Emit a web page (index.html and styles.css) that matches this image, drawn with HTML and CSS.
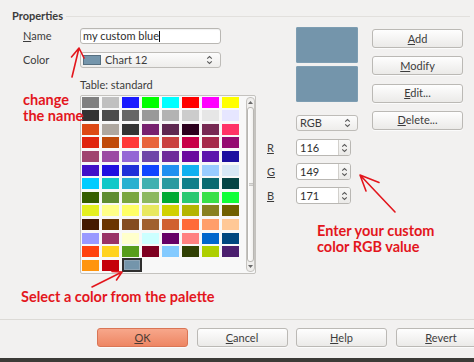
FILE: index.html
```html
<!DOCTYPE html>
<html>
<head>
<meta charset="utf-8">
<title>Properties</title>
<link rel="stylesheet" href="styles.css">
</head>
<body>
<div class="dialog">
  <div class="top">
    <div class="frame-title"><span class="frame-label">Properties</span><span class="frame-rule"></span></div>
    <div class="content">
      <div class="col-left">
        <div class="field field-name">
          <span class="lbl"><u>N</u>ame</span>
          <div class="entry">my custom blue<span class="caret"></span></div>
        </div>
        <div class="field field-color">
          <span class="lbl">Color</span>
          <div class="combo combo-color">
            <span class="combo-swatch"></span>
            <span class="combo-text">Chart 12</span>
            <svg class="updown" viewBox="0 0 7 10"><path d="M1.2 3.6 L3.5 1.5 L5.8 3.6 M1.2 6.4 L3.5 8.5 L5.8 6.4"/></svg>
          </div>
        </div>
        <div class="table-label">Table: standard</div>
        <div class="palette">
          <div class="grid">
            <span class="cell" style="background:#808080"></span><span class="cell" style="background:#c0c0c0"></span><span class="cell" style="background:#1a1aff"></span><span class="cell" style="background:#00ff00"></span><span class="cell" style="background:#00ffff"></span><span class="cell" style="background:#ff0000"></span><span class="cell" style="background:#ff00ff"></span><span class="cell" style="background:#ffff00"></span>
            <span class="cell" style="background:#333333"></span><span class="cell" style="background:#4c4c4c"></span><span class="cell" style="background:#666666"></span><span class="cell" style="background:#999999"></span><span class="cell" style="background:#b3b3b3"></span><span class="cell" style="background:#cccccc"></span><span class="cell" style="background:#e6e6e6"></span><span class="cell" style="background:#e6e6ff"></span>
            <span class="cell" style="background:#dd4814"></span><span class="cell" style="background:#aea79f"></span><span class="cell" style="background:#333333"></span><span class="cell" style="background:#77216f"></span><span class="cell" style="background:#5e2750"></span><span class="cell" style="background:#2c001e"></span><span class="cell" style="background:#772953"></span><span class="cell" style="background:#ff3366"></span>
            <span class="cell" style="background:#e0250f"></span><span class="cell" style="background:#c04a0a"></span><span class="cell" style="background:#ff3838"></span><span class="cell" style="background:#e8643c"></span><span class="cell" style="background:#c9403f"></span><span class="cell" style="background:#c80048"></span><span class="cell" style="background:#a52a4a"></span><span class="cell" style="background:#950a70"></span>
            <span class="cell" style="background:#a0456f"></span><span class="cell" style="background:#9b4ba3"></span><span class="cell" style="background:#9467d5"></span><span class="cell" style="background:#6f47a8"></span><span class="cell" style="background:#6f2b9a"></span><span class="cell" style="background:#6a0a9e"></span><span class="cell" style="background:#5c15ac"></span><span class="cell" style="background:#1c0fa0"></span>
            <span class="cell" style="background:#4010c8"></span><span class="cell" style="background:#2010e0"></span><span class="cell" style="background:#2030d8"></span><span class="cell" style="background:#1045ff"></span><span class="cell" style="background:#2090f0"></span><span class="cell" style="background:#10b0f0"></span><span class="cell" style="background:#99ccff"></span><span class="cell" style="background:#d8e8f5"></span>
            <span class="cell" style="background:#00ccff"></span><span class="cell" style="background:#10c8c8"></span><span class="cell" style="background:#28b0d0"></span><span class="cell" style="background:#40b0b0"></span><span class="cell" style="background:#2a9aa0"></span><span class="cell" style="background:#107f8a"></span><span class="cell" style="background:#0a6a70"></span><span class="cell" style="background:#064545"></span>
            <span class="cell" style="background:#355e00"></span><span class="cell" style="background:#5e8c31"></span><span class="cell" style="background:#7aa640"></span><span class="cell" style="background:#8cb860"></span><span class="cell" style="background:#00a933"></span><span class="cell" style="background:#2ac870"></span><span class="cell" style="background:#38e048"></span><span class="cell" style="background:#10ff38"></span>
            <span class="cell" style="background:#e4f020"></span><span class="cell" style="background:#ffff88"></span><span class="cell" style="background:#ffff66"></span><span class="cell" style="background:#e8e860"></span><span class="cell" style="background:#d0d000"></span><span class="cell" style="background:#b4b400"></span><span class="cell" style="background:#888020"></span><span class="cell" style="background:#706000"></span>
            <span class="cell" style="background:#441a00"></span><span class="cell" style="background:#6a3500"></span><span class="cell" style="background:#844c20"></span><span class="cell" style="background:#a0602e"></span><span class="cell" style="background:#d06030"></span><span class="cell" style="background:#ff6a38"></span><span class="cell" style="background:#ff9e6a"></span><span class="cell" style="background:#ffc896"></span>
            <span class="cell" style="background:#9999ff"></span><span class="cell" style="background:#993366"></span><span class="cell" style="background:#ffffcc"></span><span class="cell" style="background:#ccffff"></span><span class="cell" style="background:#660066"></span><span class="cell" style="background:#ff8080"></span><span class="cell" style="background:#0066cc"></span><span class="cell" style="background:#00477f"></span>
            <span class="cell" style="background:#ff420e"></span><span class="cell" style="background:#ffd320"></span><span class="cell" style="background:#579d1c"></span><span class="cell" style="background:#7e0021"></span><span class="cell" style="background:#83caff"></span><span class="cell" style="background:#314004"></span><span class="cell" style="background:#aecf00"></span><span class="cell" style="background:#4b1f6f"></span>
            <span class="cell" style="background:#ff950e"></span><span class="cell" style="background:#c5000b"></span><span class="cell sel" style="background:#7495ab"></span>
          </div>
          <div class="scroll">
            <svg class="sarrow" viewBox="0 0 5 3"><path d="M0 3 L2.5 0 L5 3 Z"/></svg>
            <div class="thumb"><svg class="grip" viewBox="0 0 5 3"><path d="M0 0.5 H5 M0 2.5 H5"/></svg></div>
            <svg class="sarrow" viewBox="0 0 5 3"><path d="M0 0 L2.5 3 L5 0 Z"/></svg>
          </div>
        </div>
      </div>
      <div class="col-mid">
        <div class="preview">
          <span class="swatch"></span>
          <span class="swatch"></span>
        </div>
        <div class="combo combo-rgb">
          <span class="combo-text">RGB</span>
          <svg class="updown" viewBox="0 0 7 10"><path d="M1.2 3.6 L3.5 1.5 L5.8 3.6 M1.2 6.4 L3.5 8.5 L5.8 6.4"/></svg>
        </div>
        <div class="spin-row spin-first">
          <span class="spin-lbl"><u>R</u></span>
          <div class="spin"><span class="spin-val">116</span><span class="spin-btns"><svg class="updown" viewBox="0 0 7 10"><path d="M1.2 3.6 L3.5 1.5 L5.8 3.6 M1.2 6.4 L3.5 8.5 L5.8 6.4"/></svg></span></div>
        </div>
        <div class="spin-row">
          <span class="spin-lbl"><u>G</u></span>
          <div class="spin"><span class="spin-val">149</span><span class="spin-btns"><svg class="updown" viewBox="0 0 7 10"><path d="M1.2 3.6 L3.5 1.5 L5.8 3.6 M1.2 6.4 L3.5 8.5 L5.8 6.4"/></svg></span></div>
        </div>
        <div class="spin-row">
          <span class="spin-lbl"><u>B</u></span>
          <div class="spin"><span class="spin-val">171</span><span class="spin-btns"><svg class="updown" viewBox="0 0 7 10"><path d="M1.2 3.6 L3.5 1.5 L5.8 3.6 M1.2 6.4 L3.5 8.5 L5.8 6.4"/></svg></span></div>
        </div>
      </div>
      <div class="col-btns">
        <div class="btn"><span><u>A</u>dd</span></div>
        <div class="btn"><span><u>M</u>odify</span></div>
        <div class="btn"><span><u>E</u>dit...</span></div>
        <div class="btn"><span><u>D</u>elete...</span></div>
      </div>
    </div>
  </div>
  <div class="bottom">
    <div class="btn btn-ok"><span><u>O</u>K</span></div>
    <div class="btn"><span><u>C</u>ancel</span></div>
    <div class="btn"><span><u>H</u>elp</span></div>
    <div class="btn"><span><u>R</u>evert</span></div>
  </div>
  <div class="taskbar"></div>

  <div class="note note-name">change<br>the name</div>
  <div class="note note-rgb">Enter your custom<br>color RGB value</div>
  <div class="note note-palette">Select a color from the palette</div>
  <svg class="arrows" viewBox="0 0 474 362">
    <g>
      <path d="M72 77 L79 48 M71.5 57 L79 48 L84 58"/>
      <path d="M92 287 L122 272 M112 271.5 L122 272 L116.5 280"/>
      <path d="M395 212 L360 175 M379 182.5 L360 175 L366 191"/>
    </g>
  </svg>
</div>
</body>
</html>
```

FILE: styles.css
```css
* { box-sizing: border-box; margin: 0; padding: 0; }
html, body { width: 474px; height: 362px; overflow: hidden; }
body {
  background: #f2f1f0;
  font-family: Lato, "Open Sans", sans-serif;
  font-size: 11px;
  line-height: 16px;
  color: #3c3c3c;
}
u { text-decoration: underline; text-underline-offset: 1px; }
.dialog { position: relative; width: 474px; height: 362px; display: flex; flex-direction: column; }

.top { height: 320px; flex-shrink: 0; border-bottom: 1px solid #dcdad6; }
.frame-title { display: flex; align-items: center; gap: 3px; height: 24px; padding: 8px 4px 0 12px; }
.frame-label { font-weight: bold; line-height: 16px; }
.frame-rule { flex: 1; height: 1px; background: #e2e0dd; }

.content { display: flex; padding-left: 23px; }

.col-left { width: 235px; display: flex; flex-direction: column; }
.field { display: flex; align-items: center; height: 16px; }
.field-name { margin-top: 4px; }
.field-color { margin-top: 8px; }
.lbl { width: 57px; flex-shrink: 0; }
.entry {
  width: 141px; height: 16px;
  display: flex; align-items: center;
  padding-left: 2px;
  background: #fff;
  border: 1px solid #b9b7b3;
  border-radius: 3px;
  box-shadow: inset 0 1px 1px rgba(0,0,0,0.06);
  color: #2e2e2e;
}
.caret { width: 1px; height: 11px; background: #111; }

.combo {
  height: 16px;
  display: flex; align-items: center;
  border: 1px solid #bebcb8;
  border-radius: 3px;
  background: linear-gradient(#fcfcfc, #eeedeb);
}
.combo-color { width: 141px; padding: 0 7px 0 2px; }
.combo-rgb { width: 62px; margin-left: 29px; margin-top: 13px; padding: 0 6px 0 3px; }
.combo-swatch { width: 18px; height: 10px; background: #7495ab; border: 1px solid #566f80; margin-right: 4px; }
.combo-text { flex: 1; line-height: 14px; }
.updown { width: 7px; height: 10px; fill: none; stroke: #5a5a5a; stroke-width: 1.1; }

.table-label { margin-top: 10px; margin-left: 57px; height: 14px; line-height: 14px; }
.palette {
  margin-top: 3px; margin-left: 57px;
  width: 176px; height: 179px;
  display: flex;
  padding: 0.7px 0 1px 1px;
  background: #f8f8f8;
  border: 1px solid #c4c2be;
  border-radius: 2px;
}
.grid {
  display: grid;
  grid-template-columns: repeat(8, 17px);
  grid-auto-rows: 11px;
  column-gap: 3px;
  row-gap: 2.6px;
  align-content: start;
}
.cell { display: block; }
.cell.sel { margin: -2px -3px -1px 0; border: 2px solid #2f2f2f; box-shadow: inset 0 0 0 1px #8ea5b6; }

.scroll {
  margin-left: 7px; width: 9px;
  display: flex; flex-direction: column; align-items: center;
  border: 1px solid #c6c4c0;
  border-radius: 4px;
  background: #efeeec;
}
.sarrow { width: 5px; height: 3px; fill: #6a6a6a; margin: 3px 0; flex-shrink: 0; }
.thumb {
  flex: 1; width: 7px;
  display: flex; align-items: center; justify-content: center;
  border: 1px solid #b8b6b2;
  border-radius: 3px;
  background: linear-gradient(to right, #ffffff, #f1f0ee);
}
.grip { width: 4px; height: 3px; stroke: #9a9894; stroke-width: 0.8; }

.col-mid { width: 91px; margin-left: 9px; display: flex; flex-direction: column; }
.preview { width: 62px; margin-left: 29px; margin-top: 3px; display: flex; flex-direction: column; gap: 3px; }
.swatch { display: block; height: 36px; background: #7495ab; border-radius: 2px; box-shadow: inset 0 0 0 1px #7d9db2; }

.spin-row { display: flex; align-items: center; height: 17px; margin-top: 7px; }
.spin-first { margin-top: 8px; }
.spin-lbl { width: 29px; flex-shrink: 0; }
.spin {
  width: 55px; height: 17px;
  display: flex;
  background: #fff;
  border: 1px solid #b9b7b3;
  border-radius: 3px;
  overflow: hidden;
}
.spin-val { flex: 1; padding-left: 3px; line-height: 15px; color: #2e2e2e; }
.spin-btns {
  width: 12px;
  display: flex; align-items: center; justify-content: center;
  border-left: 1px solid #d2d0cc;
  background: linear-gradient(#f8f8f7, #ebeae8);
}

.col-btns { width: 91px; margin-left: 14px; padding-top: 5px; display: flex; flex-direction: column; gap: 8.33px; }
.btn {
  width: 91px; height: 19px; flex-shrink: 0;
  display: flex; align-items: center; justify-content: center;
  border: 1px solid #bbb9b5;
  border-radius: 3px;
  background: linear-gradient(#fefefe, #ebeae8);
  box-shadow: 0 1px 0 rgba(255,255,255,0.7);
  color: #3c3c3c;
}
.btn-ok { background: linear-gradient(#f7a78b, #ee8663); border-color: #d97555; color: #4a3a34; }

.bottom { height: 38px; flex-shrink: 0; display: flex; gap: 8.5px; padding: 8px 0 0 97px; overflow: hidden; }
.taskbar { height: 4px; flex-shrink: 0; background: #3c3b37; }

.note {
  position: absolute;
  color: #e3161d;
  font-weight: bold;
  font-size: 14.5px;
  line-height: 16px;
  white-space: nowrap;
}
.note-name { left: 23px; top: 92px; }
.note-rgb { left: 317px; top: 223px; }
.note-palette { left: 21px; top: 289px; }

.arrows { position: absolute; left: 0; top: 0; width: 474px; height: 362px; pointer-events: none; }
.arrows g { stroke: #e3161d; stroke-width: 1.6; fill: none; stroke-linecap: round; stroke-linejoin: round; }
```
